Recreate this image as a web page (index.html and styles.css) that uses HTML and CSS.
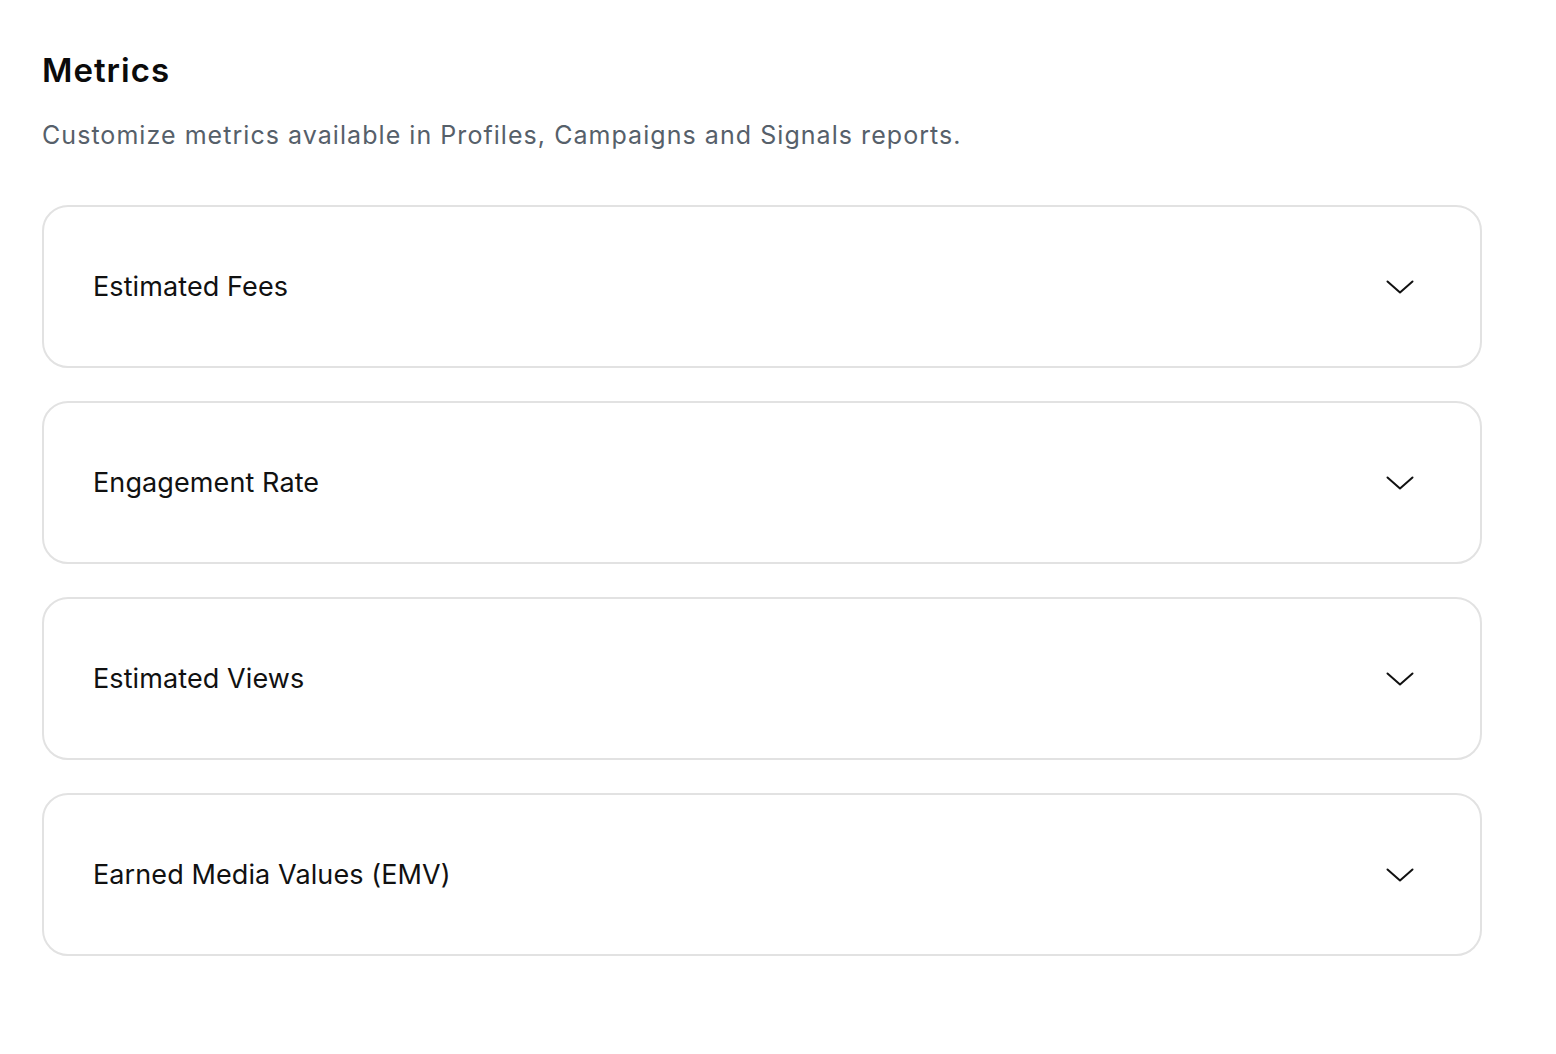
FILE: index.html
```html
<!DOCTYPE html>
<html lang="en">
<head>
<meta charset="utf-8">
<title>Metrics</title>
<link rel="stylesheet" href="styles.css">
</head>
<body>
<main class="page">
  <h1 class="title">Metrics</h1>
  <p class="subtitle">Customize metrics available in Profiles, Campaigns and Signals reports.</p>
  <div class="list">
    <div class="card">
      <span class="card-label">Estimated Fees</span>
      <svg class="chevron" viewBox="0 0 28 14" width="28" height="14"><path d="M1.5 1.5 L14 12.5 L26.5 1.5" fill="none" stroke="#111" stroke-width="2" stroke-linecap="round" stroke-linejoin="round"/></svg>
    </div>
    <div class="card">
      <span class="card-label">Engagement Rate</span>
      <svg class="chevron" viewBox="0 0 28 14" width="28" height="14"><path d="M1.5 1.5 L14 12.5 L26.5 1.5" fill="none" stroke="#111" stroke-width="2" stroke-linecap="round" stroke-linejoin="round"/></svg>
    </div>
    <div class="card">
      <span class="card-label">Estimated Views</span>
      <svg class="chevron" viewBox="0 0 28 14" width="28" height="14"><path d="M1.5 1.5 L14 12.5 L26.5 1.5" fill="none" stroke="#111" stroke-width="2" stroke-linecap="round" stroke-linejoin="round"/></svg>
    </div>
    <div class="card">
      <span class="card-label">Earned Media Values (EMV)</span>
      <svg class="chevron" viewBox="0 0 28 14" width="28" height="14"><path d="M1.5 1.5 L14 12.5 L26.5 1.5" fill="none" stroke="#111" stroke-width="2" stroke-linecap="round" stroke-linejoin="round"/></svg>
    </div>
  </div>
</main>
</body>
</html>
```
FILE: styles.css
```css
* { box-sizing: border-box; }
html, body { margin: 0; padding: 0; background: #fff; }
body { font-family: Inter, "Noto Sans", "Liberation Sans", sans-serif; color: #111; }
.page { padding: 48px 74px 0 42px; }
.title { margin: 0; font-size: 33px; font-weight: 600; line-height: 44px; letter-spacing: 1px; color: #0b0b0b; }
.subtitle { margin: 26px 0 0; font-size: 25px; font-weight: 400; line-height: 34px; letter-spacing: 1.05px; color: #56606a; }
.list { margin-top: 53px; display: flex; flex-direction: column; gap: 33px; }
.card { height: 163px; border: 2px solid #e2e2e2; border-radius: 26px; display: flex; align-items: center; justify-content: space-between; padding: 0 66px 0 49px; }
.card-label { font-size: 27px; font-weight: 400; letter-spacing: 0.1px; color: #111; }
.chevron { display: block; }
```
